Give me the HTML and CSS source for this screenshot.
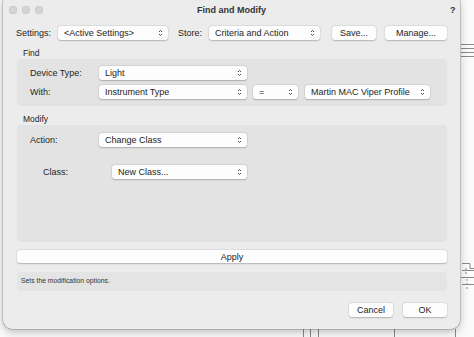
FILE: index.html
```html
<!DOCTYPE html>
<html lang="en">
<head>
    <meta charset="UTF-8">
    <meta name="viewport" content="width=device-width, initial-scale=1.0">
    <title>Find and Modify</title>
    <link rel="stylesheet" href="styles.css">
</head>
<body>
    <!-- drawing behind the dialog -->
    <svg class="backdrop" width="474" height="337" viewBox="0 0 474 337">
        <g stroke="#8a8a8a" stroke-width="1" fill="none">
            <path d="M461 44.5H474M461 48.5H474M461 52.5H474M461 56.5H474"/>
            <path d="M462 263.5H470V268.5H474M462 270.5H474M461 277.5H474M462 284.5H474"/>
            <path d="M466 268V276M467 279V290" stroke-dasharray="2 2"/>
            <path d="M303.5 329V337M310.5 329V337M318.5 329V337M394.5 329V337M455.5 329V337"/>
        </g>
    </svg>

    <div class="window">
        <div class="titlebar">
            <div class="lights"><span></span><span></span><span></span></div>
            <div class="title">Find and Modify</div>
            <div class="help">?</div>
        </div>

        <div class="content">
            <div class="toolbar">
                <span class="lbl settings-lbl">Settings:</span>
                <div class="popup settings-pop">&lt;Active Settings&gt;<svg class="arrows" width="5" height="8" viewBox="0 0 5 8"><path d="M1 3L2.5 1.5L4 3M1 5L2.5 6.5L4 5"/></svg></div>
                <span class="lbl store-lbl">Store:</span>
                <div class="popup store-pop">Criteria and Action<svg class="arrows" width="5" height="8" viewBox="0 0 5 8"><path d="M1 3L2.5 1.5L4 3M1 5L2.5 6.5L4 5"/></svg></div>
                <button class="btn save">Save...</button>
                <button class="btn manage">Manage...</button>
            </div>

            <div class="group-title">Find</div>
            <div class="group find">
                <div class="row">
                    <span class="lbl field-lbl">Device Type:</span>
                    <div class="popup main-pop">Light<svg class="arrows" width="5" height="8" viewBox="0 0 5 8"><path d="M1 3L2.5 1.5L4 3M1 5L2.5 6.5L4 5"/></svg></div>
                </div>
                <div class="row">
                    <span class="lbl field-lbl">With:</span>
                    <div class="popup main-pop">Instrument Type<svg class="arrows" width="5" height="8" viewBox="0 0 5 8"><path d="M1 3L2.5 1.5L4 3M1 5L2.5 6.5L4 5"/></svg></div>
                    <div class="popup op-pop">=<svg class="arrows" width="5" height="8" viewBox="0 0 5 8"><path d="M1 3L2.5 1.5L4 3M1 5L2.5 6.5L4 5"/></svg></div>
                    <div class="popup value-pop">Martin MAC Viper Profile<svg class="arrows" width="5" height="8" viewBox="0 0 5 8"><path d="M1 3L2.5 1.5L4 3M1 5L2.5 6.5L4 5"/></svg></div>
                </div>
            </div>

            <div class="group-title modify-title">Modify</div>
            <div class="group modify">
                <div class="row">
                    <span class="lbl field-lbl">Action:</span>
                    <div class="popup main-pop">Change Class<svg class="arrows" width="5" height="8" viewBox="0 0 5 8"><path d="M1 3L2.5 1.5L4 3M1 5L2.5 6.5L4 5"/></svg></div>
                </div>
                <div class="row class-row">
                    <span class="lbl field-lbl">Class:</span>
                    <div class="popup class-pop">New Class...<svg class="arrows" width="5" height="8" viewBox="0 0 5 8"><path d="M1 3L2.5 1.5L4 3M1 5L2.5 6.5L4 5"/></svg></div>
                </div>
            </div>

            <button class="btn apply">Apply</button>

            <div class="status">Sets the modification options.</div>

            <div class="footer">
                <button class="btn">Cancel</button>
                <button class="btn">OK</button>
            </div>
        </div>
    </div>
</body>
</html>
```

FILE: styles.css
```css
body {
    margin: 0;
    width: 474px;
    height: 337px;
    overflow: hidden;
    position: relative;
    background-color: #fbfbfb;
    font-family: "Liberation Sans", Arial, sans-serif;
    font-size: 9px;
    color: #242424;
}
.backdrop {
    position: absolute;
    left: 0;
    top: 0;
}
.window {
    position: absolute;
    left: 3px;
    top: -6px;
    width: 457px;
    height: 335px;
    background-color: #ececec;
    border-radius: 9px;
    box-shadow: 0 0 0 0.5px rgba(0, 0, 0, 0.3), 0 3px 10px rgba(0, 0, 0, 0.25);
    display: flex;
    flex-direction: column;
}
.titlebar {
    height: 26px;
    display: flex;
    align-items: flex-end;
}
.lights {
    display: flex;
    gap: 5px;
    padding-left: 6px;
    height: 20px;
    align-items: center;
}
.lights span {
    width: 8px;
    height: 8px;
    border-radius: 50%;
    background-color: #d4d4d4;
    box-shadow: inset 0 0 0 0.5px #c4c4c4;
}
.title {
    flex: 1;
    height: 20px;
    line-height: 20px;
    text-align: center;
    font-weight: bold;
    color: #333;
    margin-left: -30px;
}
.help {
    width: 10px;
    height: 20px;
    line-height: 20px;
    font-weight: bold;
    color: #333;
}
.content {
    flex: 1;
    display: flex;
    flex-direction: column;
    padding: 0 13px 12px 14px;
}
.toolbar {
    display: flex;
    align-items: center;
    height: 14px;
    margin: 6px 0 0 -1px;
}
.lbl {
    white-space: nowrap;
}
.settings-lbl {
    width: 42px;
}
.store-lbl {
    width: 31px;
    margin-left: 10px;
}
.popup {
    box-sizing: border-box;
    height: 14px;
    line-height: 14px;
    padding: 0 5px 0 6px;
    background-color: #fdfdfd;
    border-radius: 3px;
    box-shadow: 0 0.5px 1.5px rgba(0, 0, 0, 0.22), 0 0 0 0.5px rgba(0, 0, 0, 0.06);
    display: flex;
    justify-content: space-between;
    align-items: center;
    white-space: nowrap;
}
.arrows path {
    fill: none;
    stroke: #3a3a3a;
    stroke-width: 0.9;
}
.settings-pop {
    width: 110px;
}
.store-pop {
    width: 111px;
}
.btn {
    box-sizing: border-box;
    height: 14px;
    padding: 0;
    border: none;
    border-radius: 3px;
    background-color: #fdfdfd;
    box-shadow: 0 0.5px 1.5px rgba(0, 0, 0, 0.22), 0 0 0 0.5px rgba(0, 0, 0, 0.06);
    font-family: inherit;
    font-size: 9px;
    color: #242424;
}
.save {
    width: 44px;
    margin-left: 12px;
}
.manage {
    width: 62px;
    margin-left: 9px;
}
.group-title {
    height: 12px;
    line-height: 12px;
    margin: 7px 0 0 6px;
    font-size: 8.5px;
}
.modify-title {
    margin-top: 7px;
}
.group {
    background-color: #e3e3e3;
    border-radius: 4px;
    padding: 0 13px;
    display: flex;
    flex-direction: column;
}
.find {
    height: 47px;
    padding-top: 7px;
    gap: 5px;
    box-sizing: border-box;
}
.modify {
    height: 117px;
    padding-top: 8px;
    box-sizing: border-box;
}
.row {
    display: flex;
    align-items: center;
    height: 14px;
}
.field-lbl {
    width: 69px;
}
.main-pop {
    width: 148px;
}
.op-pop {
    width: 45px;
    margin-left: 6px;
}
.value-pop {
    width: 125px;
    margin-left: 7px;
}
.class-row {
    margin-top: 18px;
    padding-left: 13px;
}
.class-pop {
    width: 135px;
}
.apply {
    width: 100%;
    height: 13px;
    margin-top: 8px;
}
.status {
    height: 19px;
    line-height: 17px;
    margin-top: 9px;
    padding-left: 4px;
    background-color: #e4e4e4;
    border-radius: 4px;
    font-size: 6.8px;
    color: #333;
}
.footer {
    display: flex;
    justify-content: flex-end;
    gap: 10px;
    margin-top: 12px;
}
.footer .btn {
    width: 44px;
}
```
